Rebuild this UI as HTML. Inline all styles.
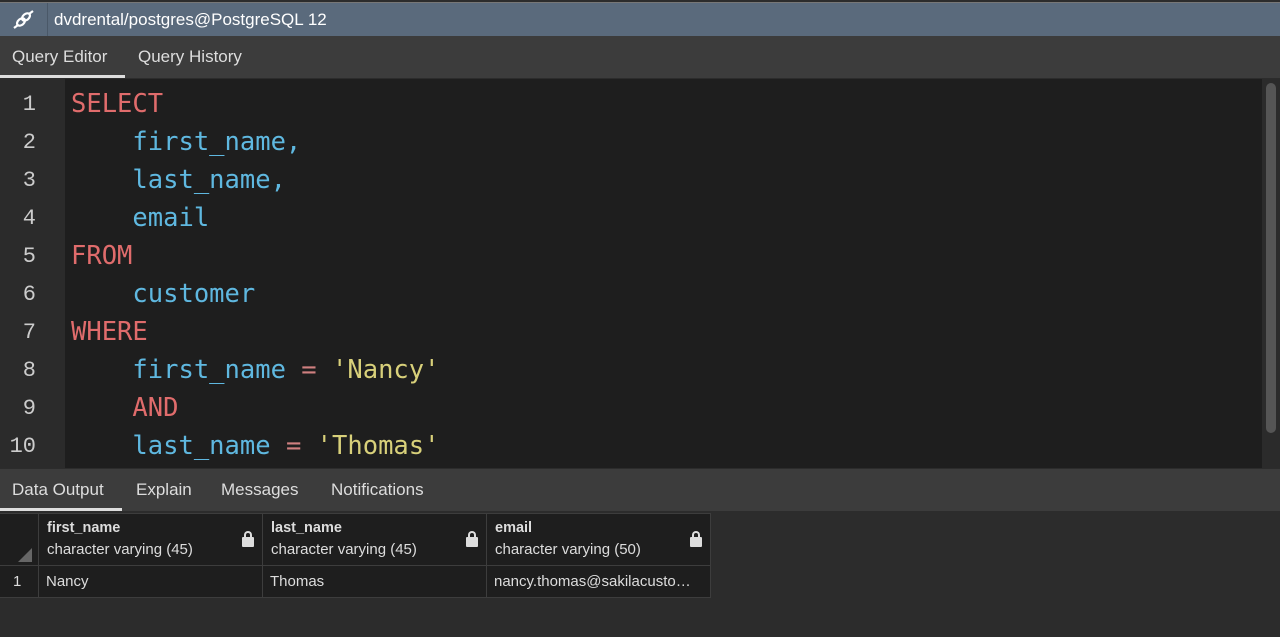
<!DOCTYPE html>
<html><head><meta charset="utf-8"><style>
*{margin:0;padding:0;box-sizing:border-box}
body{width:1280px;height:637px;background:#2c2c2c;overflow:hidden;font-family:"Liberation Sans",sans-serif;position:relative}
.title{position:absolute;left:0;top:2px;width:1280px;height:34px;background:#5a6a7c;color:#fff;font-size:17px;border-top:1px solid #777}
.title .ic{position:absolute;left:0;top:0;width:48px;height:34px;border-right:1px solid #4a5868}
.title span{position:absolute;left:54px;top:7px}
.tabs{position:absolute;left:0;width:1280px;height:42px;background:#3c3c3c;color:#ddd;font-size:17px}
.tabs span{position:absolute;top:11px}
.ul{position:absolute;bottom:0;height:3px;background:#ddd}
.editor{position:absolute;left:0;top:79px;width:1280px;height:389px;background:#1e1e1e}
.gut{position:absolute;left:0;top:0;width:65px;height:389px;background:#2b2b2b}
.ln{position:absolute;left:0;width:36px;text-align:right;color:#ccc;font-family:"Liberation Mono",monospace;font-size:22px}
.code{position:absolute;left:71px;font-family:"DejaVu Sans Mono","Liberation Mono",monospace;font-size:25.5px;white-space:pre;color:#5fb8e0}
.k{color:#e06c6c}.s{color:#d8d07a}.o{color:#d08080}
.sb{position:absolute;left:1262px;top:0;width:18px;height:389px;background:#2b2b2b}
.th{position:absolute;left:4px;top:4px;width:10px;height:350px;background:#555;border-radius:5px}
.grid{position:absolute;top:513px;left:0;font-size:15px;color:#ddd}
.c{position:absolute;background:#1e1e1e;border:1px solid #3d3d3d}
.b{font-weight:bold;font-size:14.5px}
.lock{position:absolute;right:8px;top:23px;width:12px;height:10px;background:#ddd;border-radius:1px}
.lock:before{content:"";position:absolute;left:2px;top:-6px;width:4px;height:6px;border:2px solid #ddd;border-bottom:none;border-radius:4px 4px 0 0}
</style></head><body>
<div class="title"><div class="ic"><svg width="48" height="34" viewBox="0 0 48 34"><g fill="none" stroke="#fff" stroke-width="2.2"><ellipse cx="21" cy="19" rx="4.5" ry="3" transform="rotate(-40 21 19)"/><ellipse cx="26" cy="14" rx="4.5" ry="3" transform="rotate(-40 26 14)"/><path d="M14 25l4-3M29 11l4-3"/></g></svg></div><span>dvdrental/postgres@PostgreSQL 12</span></div>
<div class="tabs" style="top:36px"><span style="left:12px">Query Editor</span><span style="left:138px">Query History</span><div class="ul" style="left:0;width:125px"></div></div>
<div class="editor">
<div class="gut"></div>
<div class="ln" style="top:13px">1</div><div class="ln" style="top:51px">2</div><div class="ln" style="top:89px">3</div><div class="ln" style="top:127px">4</div><div class="ln" style="top:165px">5</div><div class="ln" style="top:203px">6</div><div class="ln" style="top:241px">7</div><div class="ln" style="top:279px">8</div><div class="ln" style="top:317px">9</div><div class="ln" style="top:355px">10</div>
<div class="code" style="top:10px"><span class="k">SELECT</span></div>
<div class="code" style="top:48px">    first_name,</div>
<div class="code" style="top:86px">    last_name,</div>
<div class="code" style="top:124px">    email</div>
<div class="code" style="top:162px"><span class="k">FROM</span></div>
<div class="code" style="top:200px">    customer</div>
<div class="code" style="top:238px"><span class="k">WHERE</span></div>
<div class="code" style="top:276px">    first_name <span class="o">=</span> <span class="s">'Nancy'</span></div>
<div class="code" style="top:314px">    <span class="k">AND</span></div>
<div class="code" style="top:352px">    last_name <span class="o">=</span> <span class="s">'Thomas'</span></div>
<div class="sb"><div class="th"></div></div>
</div>
<div class="tabs" style="top:469px"><span style="left:12px">Data Output</span><span style="left:136px">Explain</span><span style="left:221px">Messages</span><span style="left:331px">Notifications</span><div class="ul" style="left:0;width:122px"></div></div>
<div class="grid">
<div class="c" style="left:-1px;top:0;width:40px;height:53px"><svg style="position:absolute;left:18px;top:34px" width="14" height="14"><path d="M14 0V14H0Z" fill="#666"/></svg></div>
<div class="c" style="left:38px;top:0;width:225px;height:53px"><div class="b" style="position:absolute;left:8px;top:6px">first_name</div><div style="position:absolute;left:8px;top:27px">character varying (45)</div><div class="lock"></div></div>
<div class="c" style="left:262px;top:0;width:225px;height:53px"><div class="b" style="position:absolute;left:8px;top:6px">last_name</div><div style="position:absolute;left:8px;top:27px">character varying (45)</div><div class="lock"></div></div>
<div class="c" style="left:486px;top:0;width:225px;height:53px"><div class="b" style="position:absolute;left:8px;top:6px">email</div><div style="position:absolute;left:8px;top:27px">character varying (50)</div><div class="lock"></div></div>
<div class="c" style="left:-1px;top:52px;width:40px;height:33px"><div style="position:absolute;left:13px;top:7px">1</div></div>
<div class="c" style="left:38px;top:52px;width:225px;height:33px"><div style="position:absolute;left:7px;top:7px">Nancy</div></div>
<div class="c" style="left:262px;top:52px;width:225px;height:33px"><div style="position:absolute;left:7px;top:7px">Thomas</div></div>
<div class="c" style="left:486px;top:52px;width:225px;height:33px"><div style="position:absolute;left:7px;top:7px">nancy.thomas@sakilacusto…</div></div>
</div>
</body></html>
